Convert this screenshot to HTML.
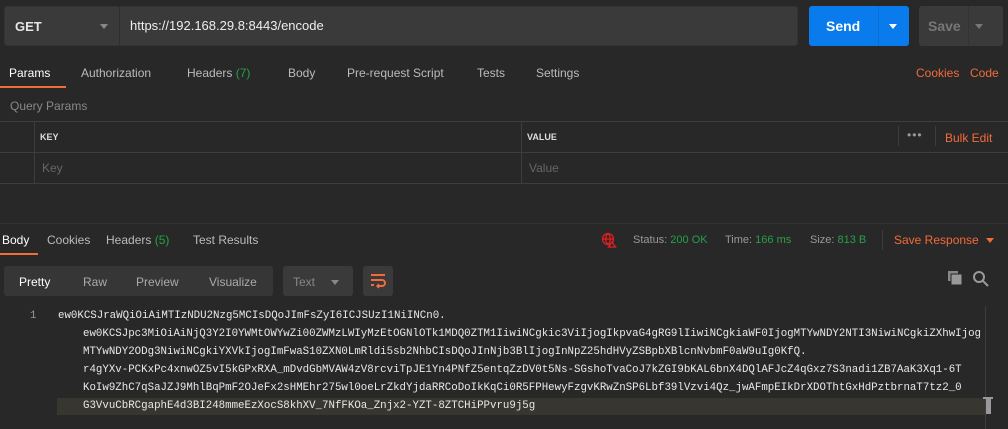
<!DOCTYPE html>
<html><head><meta charset="utf-8"><style>
*{box-sizing:border-box;margin:0;padding:0}
body{width:1008px;height:429px;background:#282828;font-family:"Liberation Sans",sans-serif;font-size:12px;color:#ccc;position:relative;overflow:hidden}
.a{position:absolute}
.tab{position:absolute;top:66px;font-size:12px;color:#bbb}
.org{color:#f26b3a}
.grn{color:#27a047}
.code{font-family:"Liberation Mono",monospace;font-size:10.78px;color:#e8e8e8;position:absolute;left:83px;white-space:pre}
</style></head><body>
<div class="a" style="left:4px;top:6px;width:794px;height:40px;background:#3a3a3a;border-radius:3px;border:1px solid #333"></div>
<div class="a" style="left:119px;top:6px;width:1px;height:40px;background:#2e2e2e"></div>
<div class="a" style="left:15px;top:19px;font-weight:bold;font-size:13px;color:#e6e6e6">GET</div>
<div class="a" style="left:100px;top:24px;border-left:4px solid transparent;border-right:4px solid transparent;border-top:5px solid #888"></div>
<div class="a" style="left:130px;top:18px;font-size:13px;color:#eee">https://192.168.29.8:8443/encode</div>
<div class="a" style="left:809px;top:6px;width:100px;height:40px;background:#097bed;border-radius:3px"></div>
<div class="a" style="left:878px;top:6px;width:1px;height:40px;background:#0a6ed2"></div>
<div class="a" style="left:826px;top:18px;font-weight:bold;font-size:14px;color:#fff">Send</div>
<div class="a" style="left:889px;top:24px;border-left:4px solid transparent;border-right:4px solid transparent;border-top:5px solid #fff"></div>
<div class="a" style="left:919px;top:6px;width:84px;height:40px;background:#3a3a3a;border-radius:3px"></div>
<div class="a" style="left:968px;top:6px;width:1px;height:40px;background:#333"></div>
<div class="a" style="left:928px;top:18px;font-weight:bold;font-size:14px;color:#777">Save</div>
<div class="a" style="left:975px;top:24px;border-left:4px solid transparent;border-right:4px solid transparent;border-top:5px solid #777"></div>
<div class="tab" style="left:9px;color:#fff">Params</div>
<div class="a" style="left:0;top:86px;width:66px;height:2px;background:#f26b3a"></div>
<div class="tab" style="left:81px">Authorization</div>
<div class="tab" style="left:187px">Headers <span class="grn">(7)</span></div>
<div class="tab" style="left:288px">Body</div>
<div class="tab" style="left:347px">Pre-request Script</div>
<div class="tab" style="left:477px">Tests</div>
<div class="tab" style="left:536px">Settings</div>
<div class="tab org" style="left:916px">Cookies</div>
<div class="tab org" style="left:970px">Code</div>
<div class="a" style="left:10px;top:99px;color:#888">Query Params</div>
<div class="a" style="left:0;top:121px;width:1008px;height:1px;background:#3d3d3d"></div>
<div class="a" style="left:0;top:152px;width:1008px;height:1px;background:#3d3d3d"></div>
<div class="a" style="left:0;top:183px;width:1008px;height:1px;background:#3d3d3d"></div>
<div class="a" style="left:34px;top:121px;width:1px;height:62px;background:#3d3d3d"></div>
<div class="a" style="left:521px;top:121px;width:1px;height:62px;background:#3d3d3d"></div>
<div class="a" style="left:898px;top:126px;width:1px;height:20px;background:#3d3d3d"></div>
<div class="a" style="left:935px;top:126px;width:1px;height:20px;background:#3d3d3d"></div>
<div class="a" style="left:40px;top:132px;font-size:9px;font-weight:bold;color:#ddd">KEY</div>
<div class="a" style="left:527px;top:132px;font-size:9px;font-weight:bold;color:#ddd">VALUE</div>
<div class="a" style="left:907px;top:128px;color:#999;font-size:12px;letter-spacing:1px">•••</div>
<div class="a org" style="left:945px;top:131px">Bulk Edit</div>
<div class="a" style="left:42px;top:161px;color:#666">Key</div>
<div class="a" style="left:529px;top:161px;color:#666">Value</div>
<div class="a" style="left:0;top:223px;width:1008px;height:1px;background:#333"></div>
<div class="a" style="left:2px;top:233px;color:#fff">Body</div>
<div class="a" style="left:0;top:253px;width:38px;height:2px;background:#f26b3a"></div>
<div class="a" style="left:47px;top:233px;color:#bbb">Cookies</div>
<div class="a" style="left:106px;top:233px;color:#bbb">Headers <span class="grn">(5)</span></div>
<div class="a" style="left:193px;top:233px;color:#bbb">Test Results</div>
<svg class="a" style="left:601px;top:232px" width="16" height="16" viewBox="0 0 16 16" fill="none" stroke="#e02020" stroke-width="1.3"><circle cx="7" cy="7" r="5.5"/><path d="M1.5 7h11M7 1.5c-3 3-3 8 0 11M7 1.5c3 3 3 8 0 11"/><path d="M11 10l3.5 5h-7z" fill="#282828"/></svg>
<div class="a" style="left:633px;top:234px;font-size:11px;color:#999">Status: <span class="grn">200 OK</span></div>
<div class="a" style="left:725px;top:234px;font-size:11px;color:#999">Time: <span class="grn">166 ms</span></div>
<div class="a" style="left:810px;top:234px;font-size:11px;color:#999">Size: <span class="grn">813 B</span></div>
<div class="a" style="left:882px;top:230px;width:1px;height:20px;background:#3d3d3d"></div>
<div class="a org" style="left:894px;top:233px">Save Response</div>
<div class="a" style="left:986px;top:238px;border-left:4px solid transparent;border-right:4px solid transparent;border-top:5px solid #f26b3a"></div>
<div class="a" style="left:4px;top:266px;width:269px;height:30px;background:#363636;border-radius:3px"></div>
<div class="a" style="left:19px;top:275px;color:#fff">Pretty</div>
<div class="a" style="left:83px;top:275px;color:#aaa">Raw</div>
<div class="a" style="left:136px;top:275px;color:#aaa">Preview</div>
<div class="a" style="left:209px;top:275px;color:#aaa">Visualize</div>
<div class="a" style="left:283px;top:266px;width:70px;height:30px;background:#3a3a3a;border-radius:3px"></div>
<div class="a" style="left:293px;top:275px;color:#888">Text</div>
<div class="a" style="left:331px;top:280px;border-left:4px solid transparent;border-right:4px solid transparent;border-top:5px solid #888"></div>
<div class="a" style="left:363px;top:266px;width:30px;height:30px;background:#3a3a3a;border-radius:3px"></div>
<svg class="a" style="left:369px;top:272px" width="18" height="18" viewBox="0 0 18 18" fill="none" stroke="#f26b3a" stroke-width="2"><path d="M2 3h14M2 8h11a3 3 0 010 6H9M2 13h3"/><path d="M10 12l-2 2 2 2" stroke-width="1.5"/></svg>
<svg class="a" style="left:947px;top:270px" width="16" height="16" viewBox="0 0 16 16"><rect x="1" y="1" width="10" height="10" fill="#888"/><rect x="4" y="4" width="11" height="11" fill="#999" stroke="#282828"/></svg>
<svg class="a" style="left:972px;top:270px" width="18" height="18" viewBox="0 0 18 18" fill="none" stroke="#999" stroke-width="2"><circle cx="7" cy="7" r="5"/><path d="M11 11l5 5"/></svg>
<div class="a" style="left:57px;top:398px;width:928px;height:17px;background:#37372f"></div>
<div class="a" style="left:985px;top:306px;width:1px;height:123px;background:#3d3d3d"></div>
<div class="a" style="left:986px;top:397px;width:5px;height:17px;background:#999"></div>
<div class="a" style="left:983px;top:397px;width:10px;height:2px;background:#999"></div>
<div class="a" style="left:30px;top:310px;font-family:'Liberation Mono',monospace;font-size:10.7px;color:#999">1</div>
<div class="code" style="left:58px;top:310px">ew0KCSJraWQiOiAiMTIzNDU2Nzg5MCIsDQoJImFsZyI6ICJSUzI1NiINCn0.</div>
<div class="code" style="top:328px">ew0KCSJpc3MiOiAiNjQ3Y2I0YWMtOWYwZi00ZWMzLWIyMzEtOGNlOTk1MDQ0ZTM1IiwiNCgkic3ViIjogIkpvaG4gRG9lIiwiNCgkiaWF0IjogMTYwNDY2NTI3NiwiNCgkiZXhwIjog</div>
<div class="code" style="top:346px">MTYwNDY2ODg3NiwiNCgkiYXVkIjogImFwaS10ZXN0LmRldi5sb2NhbCIsDQoJInNjb3BlIjogInNpZ25hdHVyZSBpbXBlcnNvbmF0aW9uIg0KfQ.</div>
<div class="code" style="top:364px">r4gYXv-PCKxPc4xnwOZ5vI5kGPxRXA_mDvdGbMVAW4zV8rcviTpJE1Yn4PNfZ5entqZzDV0t5Ns-SGshoTvaCoJ7kZGI9bKAL6bnX4DQlAFJcZ4qGxz7S3nadi1ZB7AaK3Xq1-6T</div>
<div class="code" style="top:382px">KoIw9ZhC7qSaJZJ9MhlBqPmF2OJeFx2sHMEhr275wl0oeLrZkdYjdaRRCoDoIkKqCi0R5FPHewyFzgvKRwZnSP6Lbf39lVzvi4Qz_jwAFmpEIkDrXDOThtGxHdPztbrnaT7tz2_0</div>
<div class="code" style="top:400px">G3VvuCbRCgaphE4d3BI248mmeEzXocS8khXV_7NfFKOa_Znjx2-YZT-8ZTCHiPPvru9j5g</div>
</body></html>
